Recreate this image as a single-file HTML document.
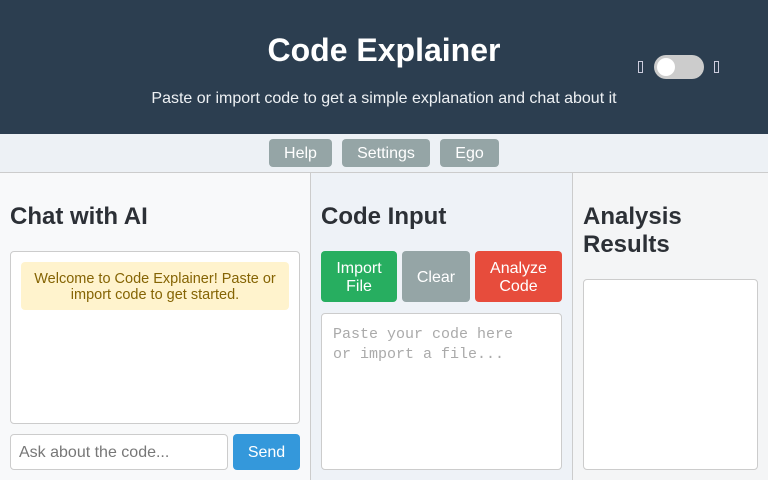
<!DOCTYPE html>
<html><head><style>
*{box-sizing:border-box;margin:0;padding:0}
body{width:768px;height:480px;overflow:hidden;font-family:"Liberation Sans",sans-serif;position:relative;background:#f4f5f6}
.a{position:absolute}
header{position:absolute;left:0;top:0;width:768px;height:134px;background:#2c3e50;color:#fff}
.btn{position:absolute;color:#fff;font-size:16px;border-radius:4px;display:flex;align-items:center;justify-content:center;text-align:center;line-height:18px}
.nb{background:#95a5a6;top:139px;height:28px;padding-top:2px}
h2{position:absolute;font-size:24px;font-weight:bold;color:#2c3036;line-height:28px}
.box{position:absolute;background:#fff;border:1px solid #ccc;border-radius:4px}
.tofu{position:absolute;width:5px;height:12px;border:1px solid #ccd;top:61px}
</style></head><body>
<header>
<div class="a" style="left:0;width:768px;top:31px;text-align:center;font-size:32px;font-weight:bold;line-height:38px">Code Explainer</div>
<div class="a" style="left:0;width:768px;top:90px;text-align:center;font-size:16px;color:#eef1f4">Paste or import code to get a simple explanation and chat about it</div>
<div class="tofu" style="left:638px"></div>
<div class="a" style="left:654px;top:55px;width:50px;height:24px;border-radius:12px;background:#ccc"></div>
<div class="a" style="left:657px;top:58px;width:18px;height:18px;border-radius:50%;background:#fff"></div>
<div class="tofu" style="left:714px"></div>
</header>
<div class="a" style="left:0;top:134px;width:768px;height:39px;background:#edf1f5;border-bottom:1px solid #ccc"></div>
<div class="btn nb" style="left:269px;width:63px">Help</div>
<div class="btn nb" style="left:342px;width:88px">Settings</div>
<div class="btn nb" style="left:440px;width:59px">Ego</div>

<div class="a" style="left:0;top:173px;width:311px;height:307px;background:#f8f9fa;border-right:1px solid #ccc"></div>
<div class="a" style="left:311px;top:173px;width:262px;height:307px;background:#eef2f7;border-right:1px solid #ccc"></div>

<h2 style="left:10px;top:203px">Chat with AI</h2>
<div class="box" style="left:10px;top:251px;width:290px;height:173px"></div>
<div class="a" style="left:21px;top:262px;width:268px;height:48px;background:#fff3cd;border-radius:4px;color:#856404;font-size:14.5px;text-align:center;line-height:16px;padding-top:9px">Welcome to Code Explainer! Paste or<br>import code to get started.</div>
<div class="box" style="left:10px;top:434px;width:218px;height:36px;font-size:16px;color:#777;padding:9px 8px">Ask about the code...</div>
<div class="btn" style="left:233px;top:434px;width:67px;height:36px;background:#3498db;padding-top:2px">Send</div>

<h2 style="left:321px;top:203px">Code Input</h2>
<div class="btn" style="left:321px;top:251px;width:76px;height:51px;background:#27ae60;padding-top:2px">Import<br>File</div>
<div class="btn" style="left:402px;top:251px;width:68px;height:51px;background:#95a5a6;padding-top:2px">Clear</div>
<div class="btn" style="left:475px;top:251px;width:87px;height:51px;background:#e74c3c;padding-top:2px">Analyze<br>Code</div>
<div class="box" style="left:321px;top:313px;width:241px;height:157px;font-family:'Liberation Mono',monospace;font-size:15px;color:#aaa;padding:11px;line-height:20px">Paste your code here<br>or import a file...</div>

<h2 style="left:583px;top:203px">Analysis<br>Results</h2>
<div class="box" style="left:583px;top:279px;width:175px;height:191px"></div>
</body></html>
